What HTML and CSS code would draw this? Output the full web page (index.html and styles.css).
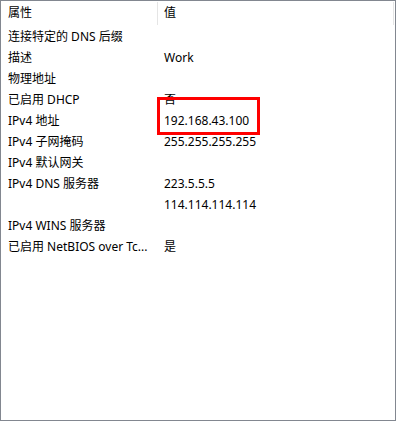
FILE: index.html
```html
<!DOCTYPE html>
<html lang="zh-CN">
<head>
<meta charset="utf-8">
<title>网络连接详细信息</title>
<link rel="stylesheet" href="styles.css">
</head>
<body>
<div class="listview">
  <div class="header">
    <div class="hcell c1">属性</div>
    <div class="sep"></div>
    <div class="hcell c2">值</div>
    <div class="sep"></div>
  </div>
  <div class="rows">
    <div class="row"><span class="c1">连接特定的 DNS 后缀</span><span class="c2"></span></div>
    <div class="row"><span class="c1">描述</span><span class="c2">Work</span></div>
    <div class="row"><span class="c1">物理地址</span><span class="c2"></span></div>
    <div class="row"><span class="c1">已启用 DHCP</span><span class="c2">否</span></div>
    <div class="row"><span class="c1">IPv4 地址</span><span class="c2">192.168.43.100</span></div>
    <div class="row"><span class="c1">IPv4 子网掩码</span><span class="c2">255.255.255.255</span></div>
    <div class="row"><span class="c1">IPv4 默认网关</span><span class="c2"></span></div>
    <div class="row"><span class="c1">IPv4 DNS 服务器</span><span class="c2">223.5.5.5</span></div>
    <div class="row"><span class="c1"></span><span class="c2">114.114.114.114</span></div>
    <div class="row"><span class="c1">IPv4 WINS 服务器</span><span class="c2"></span></div>
    <div class="row"><span class="c1" title="已启用 NetBIOS over Tcpip">已启用 NetBIOS over Tc...</span><span class="c2">是</span></div>
  </div>
  <div class="highlight"></div>
</div>
</body>
</html>
```
FILE: styles.css
```css
html, body {
  margin: 0;
  padding: 0;
  background: #ffffff;
}

.listview {
  position: relative;
  width: 396px;
  height: 421px;
  box-sizing: border-box;
  border: 1px solid #828790;
  background: #ffffff;
  font-family: "Noto Sans", "Noto Sans CJK SC", sans-serif;
  font-size: 12px;
  color: #000000;
  overflow: hidden;
}

.header {
  display: flex;
  height: 25px;
  align-items: flex-start;
}

.hcell {
  line-height: 24px;
  white-space: nowrap;
}

.header .c1 {
  width: 156px;
  padding-left: 7px;
  box-sizing: border-box;
}

.header .c2 {
  width: 235px;
  padding-left: 6px;
  box-sizing: border-box;
}

.sep {
  width: 1px;
  margin-top: 1px;
  height: 23px;
  background: #e5e5e5;
}

.rows {
  display: flex;
  flex-direction: column;
}

.row {
  display: flex;
  height: 21px;
  line-height: 21px;
  white-space: nowrap;
}

.row .c1 {
  width: 156px;
  padding-left: 7px;
  padding-right: 0;
  box-sizing: border-box;
  overflow: hidden;
}

.row .c2 {
  padding-left: 7px;
}

.highlight {
  position: absolute;
  left: 156px;
  top: 96px;
  width: 103px;
  height: 38px;
  box-sizing: border-box;
  border: 3px solid #ff0000;
}
```
